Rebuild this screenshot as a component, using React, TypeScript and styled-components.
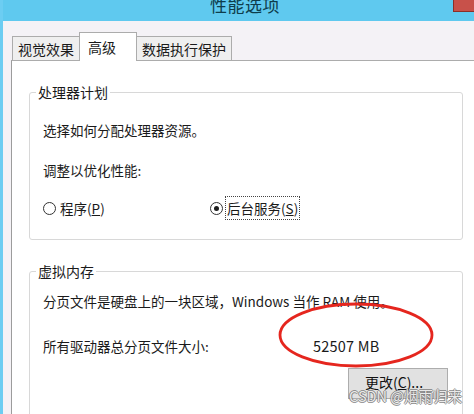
import React from 'react'
import styled, { createGlobalStyle } from 'styled-components'

const GlobalStyle = createGlobalStyle`
  html, body {
    margin: 0;
    padding: 0;
    background: #fff;
  }
  body {
    font-family: "Noto Sans CJK SC", "Noto Sans", sans-serif;
    color: #1a1a1a;
  }
`

export default function App() {
  return (
    <>
      <GlobalStyle />
      <Window>
        <TitleBar>
          <Title>性能选项</Title>
          <CloseButton />
        </TitleBar>
        <Body>
          <TabStrip>
            <Tab>视觉效果</Tab>
            <Tab $active>高级</Tab>
            <Tab>数据执行保护</Tab>
          </TabStrip>
          <Panel>
            <GroupBox>
              <Legend>处理器计划</Legend>
              <Text $top={21}>选择如何分配处理器资源。</Text>
              <Text $top={22}>调整以优化性能:</Text>
              <RadioRow>
                <RadioOption>
                  <Radio />
                  <RadioLabel>
                    程序(<u>P</u>)
                  </RadioLabel>
                </RadioOption>
                <RadioOption>
                  <Radio $checked />
                  <RadioLabel $focused>
                    后台服务(<u>S</u>)
                  </RadioLabel>
                </RadioOption>
              </RadioRow>
            </GroupBox>

            <GroupBox $gap={23}>
              <Legend>虚拟内存</Legend>
              <Text $top={13}>分页文件是硬盘上的一块区域，Windows 当作 RAM 使用。</Text>
              <ValueRow>
                <span>所有驱动器总分页文件大小:</span>
                <Value>
                  52507 MB
                  <Circle viewBox="0 0 156 66" width="156" height="66">
                    <ellipse cx="78" cy="33" rx="76" ry="31" fill="none" stroke="#e5261e" strokeWidth="2.8" />
                  </Circle>
                </Value>
              </ValueRow>
              <ButtonRow>
                <Button>
                  更改(<u>C</u>)...
                </Button>
              </ButtonRow>
            </GroupBox>
          </Panel>
        </Body>
        <Watermark>CSDN @烟雨归来</Watermark>
      </Window>
    </>
  )
}

const Window = styled.div`
  position: relative;
  width: 474px;
  height: 414px;
  overflow: hidden;
  box-sizing: border-box;
  border-left: 3px solid #6ccdf2;
  background: #f4f2f6;
  display: flex;
  flex-direction: column;
`

const TitleBar = styled.div`
  flex: none;
  height: 33px;
  margin-top: -12px;
  margin-left: -3px;
  background: #5fc9ef;
  display: flex;
  align-items: center;
  padding-left: 210px;
`

const Title = styled.span`
  font-size: 17px;
  line-height: 20px;
  color: #0e3d4c;
  letter-spacing: 0.5px;
`

const CloseButton = styled.span`
  align-self: flex-start;
  margin-left: auto;
  margin-right: -10px;
  width: 31px;
  height: 24px;
  box-sizing: border-box;
  background: #c8514a;
  border: 1px solid #8c2f29;
`

const Body = styled.div`
  flex: 1;
  min-height: 0;
  display: flex;
  flex-direction: column;
  padding: 11px 0 0 8px;
`

const TabStrip = styled.div`
  flex: none;
  height: 29px;
  margin-bottom: -1px;
  padding-left: 1px;
  display: flex;
  align-items: flex-end;
  position: relative;
  z-index: 1;
`

const Tab = styled.div<{ $active?: boolean }>`
  box-sizing: border-box;
  display: flex;
  align-items: center;
  height: ${p => (p.$active ? 29 : 24)}px;
  margin-bottom: ${p => (p.$active ? 0 : 1)}px;
  padding: ${p => (p.$active ? '0 20px 0 8px' : '0 5px')};
  margin-left: -1px;
  border: 1px solid #acacac;
  border-bottom: none;
  background: ${p => (p.$active ? '#fff' : '#efefef')};
  font-size: 14px;
  line-height: 16px;
  color: #1a1a1a;
  position: relative;
  z-index: ${p => (p.$active ? 2 : 1)};

  &:first-child {
    margin-left: 0;
  }
`

const Panel = styled.div`
  flex: 1;
  min-height: 0;
  background: #fff;
  border-top: 1px solid #acacac;
  border-left: 1px solid #9c9c9c;
  padding: 23px 11px 0 17px;
`

const GroupBox = styled.fieldset<{ $gap?: number }>`
  margin: ${p => p.$gap ?? 0}px 0 0;
  padding: 0 12px 20px 13px;
  min-width: 0;
  border: 1px solid #d8d8d8;
  border-radius: 3px;
  font-size: 13.5px;
  line-height: 18px;
`

const Legend = styled.legend`
  margin-left: -7px;
  padding: 0 2px;
  font-size: 14px;
  line-height: 16px;
  color: #1a1a1a;
`

const Text = styled.p<{ $top: number }>`
  margin: ${p => p.$top}px 0 0;
  font-size: 13.5px;
  line-height: 18px;
  white-space: nowrap;
`

const RadioRow = styled.div`
  margin-top: 18px;
  display: grid;
  grid-template-columns: 167px auto;
  align-items: center;
`

const RadioOption = styled.label`
  display: flex;
  align-items: center;
  gap: 3px;
`

const Radio = styled.span<{ $checked?: boolean }>`
  box-sizing: border-box;
  width: 13px;
  height: 13px;
  border-radius: 50%;
  border: 1px solid #333;
  background: #fff;
  display: flex;
  align-items: center;
  justify-content: center;

  &::after {
    content: '';
    width: 5px;
    height: 5px;
    border-radius: 50%;
    background: #1c1c1c;
    display: ${p => (p.$checked ? 'block' : 'none')};
  }
`

const RadioLabel = styled.span<{ $focused?: boolean }>`
  padding: 2px 1px;
  font-size: 13.5px;
  line-height: 18px;
  outline: ${p => (p.$focused ? '1px dotted #444' : 'none')};
`

const ValueRow = styled.div`
  margin-top: 27px;
  display: grid;
  grid-template-columns: 270px auto;
  align-items: center;
  font-size: 13.5px;
  line-height: 18px;
`

const Value = styled.span`
  position: relative;
  font-size: 14.5px;
  line-height: 18px;
  letter-spacing: 0.2px;
`

const Circle = styled.svg`
  position: absolute;
  left: -35px;
  top: -35px;
  pointer-events: none;
`

const ButtonRow = styled.div`
  margin-top: 13px;
  display: flex;
  justify-content: flex-end;
  padding-right: 2px;
`

const Button = styled.button`
  width: 100px;
  height: 31px;
  box-sizing: border-box;
  background: #e1e1e1;
  border: 1px solid #adadad;
  border-radius: 0;
  font-family: "Noto Sans CJK SC", "Noto Sans", sans-serif;
  font-size: 14px;
  line-height: 18px;
  color: #111;
  padding: 0 8px 4px 0;
`

const Watermark = styled.span`
  position: absolute;
  right: 12px;
  bottom: 9px;
  font-size: 14.5px;
  line-height: 18px;
  color: rgba(255, 255, 255, 0.85);
  text-shadow:
    1px 0 0 rgba(110, 110, 110, 0.7),
    -1px 0 0 rgba(110, 110, 110, 0.7),
    0 1px 0 rgba(110, 110, 110, 0.7),
    0 -1px 0 rgba(110, 110, 110, 0.7);
  white-space: nowrap;
`
